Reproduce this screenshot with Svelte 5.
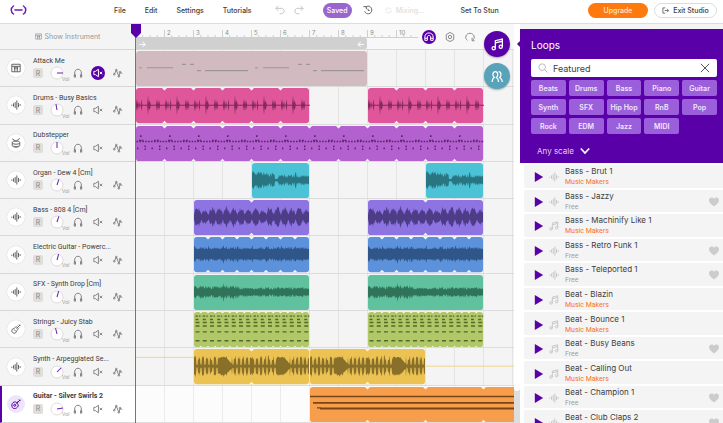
<script>
	const BAR = 29;
	const CLIP_HEIGHT = 36;

	const menu = ['File', 'Edit', 'Settings', 'Tutorials'];
	const tags = [
		'Beats', 'Drums', 'Bass', 'Piano', 'Guitar',
		'Synth', 'SFX', 'Hip Hop', 'RnB', 'Pop',
		'Rock', 'EDM', 'Jazz', 'MIDI'
	];

	// start and bars are counted in bars, seg is the length of one loop repeat
	const tracks = [
		{ name: 'Attack Me', icon: 'keys', vol: 90, muted: true, kind: 'melody', bg: '#d1bbc0', ink: '#9c9698', seg: 8, clips: [[1, 8]] },
		{ name: 'Drums - Busy Basics', icon: 'wave', vol: -10, kind: 'drums', bg: '#df569a', ink: '#842a5c', seg: 1, clips: [[1, 6], [9, 4]] },
		{ name: 'Dubstepper', icon: 'drum', vol: 0, kind: 'steps', bg: '#b461d0', ink: '#5a2470', seg: 1, clips: [[1, 12]] },
		{ name: 'Organ - Dew 4 [Cm]', icon: 'wave', vol: 18, kind: 'organ', bg: '#4cc2d7', ink: '#2a7582', seg: 2, clips: [[5, 2], [11, 2]] },
		{ name: 'Bass - 808 4 [Cm]', icon: 'wave', vol: 18, kind: 'bass', bg: '#8e73e2', ink: '#4d3c86', seg: 2, clips: [[3, 4], [9, 4]] },
		{ name: 'Electric Guitar - Powerc...', icon: 'wave', vol: 16, kind: 'dense', bg: '#5c91dc', ink: '#305689', seg: 0.5, clips: [[3, 4], [9, 4]] },
		{ name: 'SFX - Synth Drop [Cm]', icon: 'wave', vol: 16, kind: 'sfx', bg: '#60c19e', ink: '#2f7359', seg: 4, clips: [[3, 4], [9, 4]] },
		{ name: 'Strings - Juicy Stab', icon: 'strings', vol: -14, kind: 'stabs', bg: '#b0c868', ink: '#586628', seg: 0.25, clips: [[3, 4], [9, 4]] },
		{ name: 'Synth - Arpeggiated Se...', icon: 'wave', vol: 45, kind: 'arp', bg: '#ecc253', ink: '#89702a', seg: 2, clips: [[3, 4], [7, 4]], automation: [[1, 2, 9], [11, 6, 18]] },
		{ name: 'Guitar - Silver Swirls 2', icon: 'guitar', vol: 80, kind: 'chords', bg: '#f69e4c', ink: '#7b4516', seg: 2, clips: [[7, 8]], selected: true }
	];

	const loops = [
		{ name: 'Bass - Brut 1', icon: 'wave', free: false },
		{ name: 'Bass - Jazzy', icon: 'wave', free: true },
		{ name: 'Bass - Machinify Like 1', icon: 'note', free: false },
		{ name: 'Bass - Retro Funk 1', icon: 'wave', free: true },
		{ name: 'Bass - Teleported 1', icon: 'wave', free: true },
		{ name: 'Beat - Blazin', icon: 'note', free: false },
		{ name: 'Beat - Bounce 1', icon: 'note', free: false },
		{ name: 'Beat - Busy Beans', icon: 'note', free: true },
		{ name: 'Beat - Calling Out', icon: 'note', free: false },
		{ name: 'Beat - Champion 1', icon: 'wave', free: true },
		{ name: 'Beat - Club Claps 2', icon: 'wave', free: true }
	];

	let search = $state('Featured');
	let scale = $state('Any scale');

	/** @param {number} n */
	function noise(n) {
		const v = Math.sin(n * 127.1) * 43758.5453;
		return v - Math.floor(v);
	}

	/** Height of the waveform at x, measured from its centre line. */
	function amplitude(kind, x) {
		const n = noise(Math.round(x * 2) + 1);
		if (kind === 'organ') {
			if (x < 23) return 5 + n * 5 - x / 12;
			if (x < 26) return 1.2;
			if (x > 43 && x < 44.5) return 8;
			return 2 + n * 4;
		}
		if (kind === 'bass') {
			const step = (x % 58) / 7.25;
			const peak = [10, 6, 10, 9, 9, 8, 9, 7][Math.floor(step)];
			return 2 + peak * Math.pow(Math.sin((step % 1) * Math.PI), 0.8) * (0.45 + n * 0.6);
		}
		if (kind === 'dense') return 5 + Math.pow(n, 2) * 3 + (x % 14.5 < 1 ? 2 : 0);
		if (kind === 'sfx') return (x < 45 ? 3 : 2.4) + n * (x < 45 ? 4 : 3) + (x > 29 && x < 30 ? 3 : 0);
		if (kind === 'arp') {
			const p = x % 58;
			if (p > 25 && p < 38) return p < 33 ? 8 + n * 2 : 8 - (p - 33) * 1.2;
			const step = p % 4;
			return step < 2.5 ? 6 + n * 5 : 1 + n;
		}
		return 1;
	}

	function wavePath(kind, width) {
		const mid = 17.5;
		let top = `M0 ${mid}`;
		let bottom = '';
		for (let x = 0; x <= width; x += 0.5) {
			const up = amplitude(kind, x);
			const down = amplitude(kind, x) * (0.85 + noise(x * 2 + 90) * 0.25);
			top += `L${x} ${(mid - up).toFixed(1)}`;
			bottom = `L${x} ${(mid + down).toFixed(1)}` + bottom;
		}
		return top + bottom + 'Z';
	}

	function drumPath(bars) {
		const hits = [[1, 6, 2.4], [3, 4, 1.6], [5.5, 6, 1.6], [12, 10, 1.8], [13.5, 5, 3], [21, 6, 2.2], [23, 5, 2.4]];
		let d = `M0 17.1H${bars * BAR}v1H0Z`;
		for (let b = 0; b < bars; b++) {
			for (const [x, h, w] of hits) {
				d += `M${b * BAR + x - w / 2} 17.6l${w / 2} ${-h}l${w / 2} ${h}l${-w / 2} ${h}Z`;
			}
		}
		return d;
	}

	function dots(list) {
		return list.map(([x, y, w, h]) => `M${x} ${y}h${w}v${h}h${-w}Z`).join('');
	}

	function stepPath(bars) {
		const list = [];
		for (let b = 0; b < bars; b++) {
			const x = b * BAR;
			list.push([x + 4, 9.5, 1.6, 1.6]);
			for (let i = 0; i < 10; i++) list.push([x + i * 2.9 + 0.5, 15, 1.6, 1.5]);
			for (const a of [3, 5.5, 18, 21]) list.push([x + a, 14, 1.8, 1.3]);
			for (const a of [1, 15.5]) list.push([x + a, 22, 1.4, 1.6]);
			for (const a of [8.5, 23]) list.push([x + a, 20, 1.4, 1.6], [x + a, 23, 1.4, 1.6]);
		}
		return dots(list);
	}

	function stabPath(bars) {
		const list = [];
		for (let x = 1.5; x < bars * BAR - 4; x += 7.25) {
			list.push([x, 3.5, 2.5, 1.4], [x + 3.5, 3.5, 1.5, 1.4], [x, 7, 3, 1.3]);
			for (const y of [10, 13.6, 19.6, 28.6]) list.push([x, y, 4, 1.4]);
		}
		return dots(list);
	}

	function melodyPath() {
		const list = [];
		for (const x of [0, 116]) {
			list.push([x + 3, 16.5, 3, 1.2], [x + 11, 16.5, 26, 1.2]);
			list.push([x + 46, 13, 4, 1.2], [x + 54, 13, 4, 1.2]);
			list.push([x + 61, 19.5, 4, 1.2], [x + 69, 19.5, 43, 1.2]);
		}
		return dots(list);
	}

	function clipPath(kind, bars) {
		const width = bars * BAR - 1;
		if (kind === 'melody') return melodyPath();
		if (kind === 'drums') return drumPath(bars);
		if (kind === 'steps') return stepPath(bars);
		if (kind === 'stabs') return stabPath(bars);
		if (kind === 'chords') return dots([[0, 9, width, 1.5], [3, 15.4, width, 1.6], [7, 20.6, 4, 1.4], [10, 21, width, 2]]);
		return wavePath(kind, width);
	}

	// diamond cut-outs where a loop repeats
	function notchPath(bars, seg) {
		const size = seg < 0.5 ? 1.6 : 2.5;
		let d = '';
		for (let b = seg; b < bars; b += seg) {
			const x = b * BAR - 0.5;
			d += `M${x - size} 0h${size * 2}l${-size} ${size}Z`;
			d += `M${x - size} ${CLIP_HEIGHT}h${size * 2}l${-size} ${-size}Z`;
		}
		return d;
	}

	function rulerTicks() {
		let d = '';
		for (let i = 1; i <= 38; i++) {
			d += `M${i * 7.25 - 0.5} ${i % 4 === 0 ? 6 : 11}V14`;
		}
		return d;
	}
</script>

{#snippet icon(name)}
	<svg class="icon" viewBox="0 0 24 24" aria-hidden="true">
		{#if name === 'wave'}
			<path d="M2 11v3M6 8v8M10 5v14M14 1v22M18 7v10M22 10v4" />
		{:else if name === 'keys'}
			<path d="M2 3h20v18H2zM2 8h20M9 8v13M15 8v13" /><path d="M9 9v6M15 9v6" stroke-width="4" />
		{:else if name === 'drum'}
			<ellipse cx="12" cy="11" rx="9" ry="4" /><path d="M3 11v7c0 5 18 5 18 0v-7M3 2l9 6M21 1l-9 7M6 19c4 3 8 3 12 0" />
		{:else if name === 'strings'}
			<path d="M22 2l-9 9M19 1l4 4M14 7c-3-1-4 2-6 3s-5 1-6 5 3 8 7 7 4-4 5-6 4-3 3-6zM7 13l5 5M16 4l4 4" />
		{:else if name === 'guitar'}
			<path d="M22 2l-9 9M19 1l4 4M16 5l3 3M13 8c-3-2-8-1-10 3s-1 9 2 11 8 1 11-3 1-6-3-11z" /><circle cx="9" cy="15" r="2.5" />
		{:else if name === 'note'}
			<path d="M8 19V5l13-3v14" /><path d="M8 9l13-3" /><circle cx="5" cy="19" r="3" /><circle cx="18" cy="16" r="3" />
		{:else if name === 'phones'}
			<path d="M4 20v-8c0-12 16-12 16 0v8" /><path d="M3 16h3v6H3zM18 16h3v6h-3z" />
		{:else if name === 'mute'}
			<path d="M2 8h4l7-5v18l-7-5H2zM16 9l6 6M22 9l-6 6" />
		{:else if name === 'automation'}
			<path d="M3 15l5-10 6 15 3-9 5 2" /><circle cx="8" cy="5" r="2" /><circle cx="14" cy="20" r="2" /><circle cx="17" cy="10" r="2" /><circle cx="3" cy="15" r="2" />
		{:else if name === 'undo'}
			<path d="M8 2L2 8l6 6M2 8h13c9 0 9 13 0 13h-4" />
		{:else if name === 'redo'}
			<path d="M16 2l6 6-6 6M22 8H9c-9 0-9 13 0 13h4" />
		{:else if name === 'history'}
			<path d="M1 4h7v6M7 5c6-5 14-1 14 7 0 11-14 12-17 3M12 9v4h4" />
		{:else if name === 'sync'}
			<path d="M21 10c-2-9-14-9-17-1M3 14c2 9 14 9 17 1M1 6l3 4 4-3M23 18l-3-4-4 3" />
		{:else if name === 'exit'}
			<path d="M11 3H3v18h8M9 12h13M17 6l6 6-6 6" />
		{:else if name === 'magnet'}
			<path d="M2 20v-8C2-1 22-1 22 12v8h-6v-8c0-5-8-5-8 0v8zM2 15h6M16 15h6" />
		{:else if name === 'settings'}
			<path d="M12 1l9 5v12l-9 5-9-5V6z" /><circle cx="12" cy="12" r="4" />
		{:else if name === 'loop'}
			<path d="M6 20C-2 15 2 3 12 3s14 12 6 17M17 14v7h6" />
		{:else if name === 'people'}
			<path d="M2 22c0-4 1-6 4-8C2 10 3 3 8 3s6 7 2 11c3 2 4 4 4 8M14 3c5 0 6 7 2 11 3 2 5 4 5 8" />
		{:else if name === 'search'}
			<circle cx="10" cy="10" r="8" /><path d="M16 16l7 7" />
		{:else if name === 'close'}
			<path d="M2 2l20 20M22 2L2 22" />
		{:else if name === 'chevron'}
			<path d="M2 6l10 11L22 6" stroke-width="4" />
		{:else if name === 'play'}
			<path class="solid" d="M2 0l20 12L2 24z" />
		{:else if name === 'heart'}
			<path class="solid" d="M12 23C4 17 0 13 0 8c0-7 9-9 12-3 3-6 12-4 12 3 0 5-4 9-12 15z" />
		{/if}
	</svg>
{/snippet}

<svelte:head>
	<title>Set To Stun</title>
</svelte:head>

<div class="studio">
	<header class="topbar">
		<a class="logo" href="/" aria-label="Home">
			<svg viewBox="0 0 34 20">
				<path d="M7 2C1 6 1 14 7 18M27 2c6 4 6 12 0 16M10 10h14" />
			</svg>
		</a>
		<nav class="menu">
			{#each menu as item}
				<button>{item}</button>
			{/each}
		</nav>
		<div class="history">
			<button class="faint" aria-label="Undo">{@render icon('undo')}</button>
			<button class="faint" aria-label="Redo">{@render icon('redo')}</button>
		</div>
		<button class="saved">Saved</button>
		<button class="revisions" aria-label="Revisions">{@render icon('history')}</button>
		<span class="mixing">{@render icon('sync')} Mixing...</span>
		<span class="song">Set To Stun</span>
		<div class="actions">
			<button class="upgrade">Upgrade</button>
			<button class="exit">{@render icon('exit')} Exit Studio</button>
		</div>
	</header>

	<main class="workspace">
		<section class="tracks">
			<button class="show-instrument">{@render icon('keys')} Show Instrument</button>
			<div class="rows">
				{#each tracks as track}
					<div class="track" class:selected={track.selected}>
						<span class="avatar">{@render icon(track.icon)}</span>
						<div class="info">
							<div class="name">{track.name}</div>
							<div class="controls">
								<button class="record">R</button>
								<button class="knob" aria-label="Volume">
									<svg viewBox="0 0 14 14">
										<circle cx="7" cy="7" r="6" />
										<path d="M7 7V1" transform="rotate({track.vol} 7 7)" />
									</svg>
								</button>
								<span class="vol">Vol</span>
								<button class="tool" aria-label="Solo">{@render icon('phones')}</button>
								<button class="tool" class:muted={track.muted} aria-label="Mute">{@render icon('mute')}</button>
								<button class="tool" aria-label="Automation">{@render icon('automation')}</button>
							</div>
						</div>
					</div>
				{/each}
			</div>
		</section>

		<section class="timeline">
			<svg class="playhead" viewBox="0 0 10 14" aria-hidden="true"><path d="M0 0h10v9l-5 5-5-5z" /></svg>
			<div class="ruler">
				<div class="scale">
					<svg class="ticks" viewBox="0 0 282 14"><path d={rulerTicks()} /><path d="M0 13.5H282" /></svg>
					<div class="numbers">
						{#each [2, 3, 4, 5, 6, 7, 8, 9, 10] as n}
							<span>{n}</span>
						{/each}
					</div>
					<div class="loop-range"><span>→</span><span>←</span></div>
				</div>
				<div class="ruler-tools">
					<button class="snap" aria-label="Snap to grid">{@render icon('magnet')}</button>
					<button aria-label="Settings">{@render icon('settings')}</button>
					<button aria-label="Loop">{@render icon('loop')}</button>
				</div>
			</div>
			<div class="rows">
				{#each tracks as track}
					<div class="lane" class:selected={track.selected}>
						{#each track.automation ?? [] as [start, bars, level]}
							<svg
								class="clip"
								style="grid-column: {start} / span {bars}"
								viewBox="0 0 {bars * BAR} {CLIP_HEIGHT}"
								preserveAspectRatio="none"
							>
								<path d="M0 {level - 0.5}H{bars * BAR}" stroke="#edd68f" />
							</svg>
						{/each}
						{#each track.clips as [start, bars]}
							<svg
								class="clip"
								style="grid-column: {start} / span {bars}"
								viewBox="0 0 {bars * BAR} {CLIP_HEIGHT}"
								preserveAspectRatio="none"
							>
								<rect width={bars * BAR - 1} height={CLIP_HEIGHT} rx="3" fill={track.bg} />
								<path d={clipPath(track.kind, bars)} fill={track.ink} />
								<path d={notchPath(bars, track.seg)} fill="#f4f4f4" />
							</svg>
						{/each}
					</div>
				{/each}
			</div>
			<div class="floating">
				<button class="round loops-tab" aria-label="Loops">{@render icon('note')}</button>
				<button class="round people-tab" aria-label="Collaborators">{@render icon('people')}</button>
			</div>
		</section>

		<div class="scrollbar"><div class="thumb"></div></div>

		<aside class="panel">
			<span class="pointer"></span>
			<div class="filters">
				<h2>Loops</h2>
				<div class="search">
					<label for="search" aria-label="Search loops">{@render icon('search')}</label>
					<input id="search" type="text" bind:value={search} />
					<button aria-label="Clear" onclick={() => (search = '')}>{@render icon('close')}</button>
				</div>
				<div class="tags">
					{#each tags as tag}
						<button>{tag}</button>
					{/each}
				</div>
				<label class="any-scale">
					<select bind:value={scale} aria-label="Scale">
						<option>Any scale</option>
						<option>Major</option>
						<option>Minor</option>
					</select>
					{@render icon('chevron')}
				</label>
			</div>
			<ul class="loops">
				{#each loops as loop}
					<li>
						<button class="play" aria-label="Play {loop.name}">{@render icon('play')}</button>
						<span class="type">{@render icon(loop.icon)}</span>
						<div class="title">
							<div class="loop-name">{loop.name}</div>
							<div class="plan" class:free={loop.free}>{loop.free ? 'Free' : 'Music Makers'}</div>
						</div>
						{#if loop.free}
							<button class="like" aria-label="Like">{@render icon('heart')}</button>
						{/if}
					</li>
				{/each}
			</ul>
		</aside>
	</main>
</div>

<style>
	:global(body) {
		margin: 0;
		background: #f4f4f4;
	}

	.studio {
		display: flex;
		flex-direction: column;
		height: 100vh;
		overflow: hidden;
		font-family: Inter, 'Open Sans', sans-serif;
		font-size: 7px;
		color: #3c3c3c;
	}

	button {
		display: flex;
		align-items: center;
		justify-content: center;
		padding: 0;
		border: 0;
		background: none;
		font: inherit;
		color: inherit;
		white-space: nowrap;
		cursor: pointer;
	}

	.icon {
		display: block;
		flex: none;
		width: 10px;
		height: 10px;
		fill: none;
		stroke: currentColor;
		stroke-width: 2.4;
	}

	.icon .solid {
		fill: currentColor;
		stroke: none;
	}

	.topbar {
		display: flex;
		flex: none;
		align-items: center;
		box-sizing: border-box;
		height: 24px;
		padding: 0 6px 3px 10px;
		border-bottom: 1px solid #dcdcdc;
		background: #fff;
		font-weight: 500;
	}

	.logo svg {
		display: block;
		width: 17px;
		height: 10px;
		fill: none;
		stroke: #6a1bb5;
		stroke-width: 3;
		stroke-linecap: round;
	}

	.menu {
		display: flex;
		gap: 19px;
		margin-left: 87px;
	}

	.history {
		display: flex;
		gap: 9px;
		margin-left: 23px;
	}

	.faint {
		color: #c4c4c4;
	}

	.saved {
		width: 29px;
		height: 15px;
		margin-left: 19px;
		border-radius: 8px;
		background: #9b65cf;
		color: #fff;
	}

	.revisions {
		margin-left: 11px;
		color: #666;
	}

	.mixing {
		display: flex;
		align-items: center;
		gap: 4px;
		margin-left: 12px;
		color: #dedede;
	}

	.mixing .icon {
		width: 7px;
		height: 7px;
	}

	.song {
		margin-left: 36px;
	}

	.actions {
		display: flex;
		gap: 6px;
		margin-left: auto;
	}

	.upgrade {
		width: 60px;
		height: 15px;
		border-radius: 8px;
		background: #ff7a0e;
		color: #ffe6d2;
	}

	.exit {
		gap: 4px;
		box-sizing: border-box;
		width: 63px;
		height: 15px;
		border: 1px solid #dcdcdc;
		border-radius: 8px;
	}

	.exit .icon {
		width: 7px;
		height: 7px;
	}

	.workspace {
		display: flex;
		flex: 1;
		min-height: 0;
	}

	.tracks {
		display: flex;
		flex: none;
		flex-direction: column;
		width: 135px;
	}

	.show-instrument {
		gap: 3px;
		box-sizing: border-box;
		height: 26px;
		border-bottom: 1px solid #d8d8d8;
		color: #999;
	}

	.show-instrument .icon {
		width: 7px;
		height: 7px;
	}

	.rows {
		display: grid;
		flex: 1;
		grid-auto-rows: minmax(0, 1fr);
		min-height: 0;
	}

	.track {
		display: flex;
		align-items: center;
		gap: 8px;
		box-sizing: border-box;
		padding-left: 7px;
		border-bottom: 1px solid #d8d8d8;
	}

	.track.selected {
		padding-left: 5px;
		border-left: 2px solid #5a00a8;
		background: #fff;
	}

	.avatar {
		display: grid;
		place-items: center;
		flex: none;
		width: 18px;
		height: 18px;
		border-radius: 50%;
		background: #fff;
		box-shadow: 0 0 1px #bbb;
		color: #666;
	}

	.selected .avatar {
		background: #eee6f8;
		box-shadow: none;
		color: #5a00a8;
	}

	.name {
		font-family: Roboto, sans-serif;
		line-height: 10px;
		white-space: nowrap;
	}

	.selected .name {
		font-weight: 700;
	}

	.controls {
		display: flex;
		align-items: center;
		height: 15px;
		color: #858585;
	}

	.record {
		width: 10px;
		height: 10px;
		border-radius: 2px;
		background: #dedede;
		color: #888;
	}

	.knob {
		margin-left: 7px;
	}

	.knob svg {
		width: 14px;
		height: 14px;
		fill: #fff;
		stroke: #ddd;
	}

	.knob path {
		stroke: #6a1bb5;
	}

	.vol {
		align-self: flex-end;
		margin-left: -2px;
		font-size: 5px;
		line-height: 4px;
		color: #999;
	}

	.tool {
		width: 14px;
		height: 14px;
		margin-left: 2px;
		border-radius: 50%;
	}

	.tool + .tool {
		margin-left: 6px;
	}

	.tool.muted {
		background: #5a00a8;
		color: #fff;
	}

	.timeline {
		position: relative;
		display: flex;
		flex: 1;
		flex-direction: column;
		min-width: 0;
		border-left: 1px solid #8a5cc6;
	}

	.playhead {
		position: absolute;
		top: 0;
		left: -5px;
		z-index: 2;
		width: 10px;
		height: 14px;
		fill: #5a00a8;
	}

	.ruler {
		display: flex;
		box-sizing: border-box;
		height: 26px;
		border-bottom: 1px solid #d8d8d8;
		background: #f8f8f8;
	}

	.scale {
		display: grid;
		grid-template-rows: 14px 11px;
		flex: none;
		width: 282px;
	}

	.ticks {
		grid-area: 1 / 1;
		width: 282px;
		height: 14px;
		fill: none;
		stroke: #cfcfcf;
	}

	.numbers {
		display: grid;
		grid-area: 1 / 1;
		grid-template-columns: repeat(9, 29px);
		padding-left: 31px;
		line-height: 17px;
		font-size: 6px;
		color: #8c8c8c;
	}

	.loop-range {
		display: flex;
		align-items: center;
		justify-content: space-between;
		box-sizing: border-box;
		width: 231px;
		padding: 0 2px;
		border-radius: 0 2px 2px 0;
		background: #d0d0d0;
		color: #fff;
		font-size: 9px;
		line-height: 10px;
	}

	.ruler-tools {
		display: flex;
		align-items: center;
		gap: 7px;
		margin-left: 4px;
		color: #8c8c8c;
	}

	.ruler-tools button {
		width: 13px;
		height: 13px;
	}

	.ruler-tools .snap {
		width: 14px;
		height: 14px;
		border-radius: 50%;
		background: #5a00a8;
		color: #fff;
	}

	.lane {
		display: grid;
		grid-template-rows: minmax(0, 1fr);
		grid-template-columns: repeat(16, 29px);
		box-sizing: border-box;
		min-width: 0;
		padding-top: 1px;
		overflow: hidden;
		border-bottom: 1px solid #dcdcdc;
		background: repeating-linear-gradient(90deg, #f4f4f4 0 28px, #e4e4e4 28px 29px);
	}

	.lane.selected {
		background: repeating-linear-gradient(90deg, #fcfcfc 0 28px, #ececec 28px 29px);
	}

	.clip {
		display: block;
		grid-row: 1;
		width: 100%;
		height: 100%;
		min-height: 0;
	}

	.floating {
		position: absolute;
		top: 7px;
		right: 4px;
		z-index: 2;
		display: flex;
		flex-direction: column;
		gap: 6px;
	}

	.round {
		width: 26px;
		height: 26px;
		border-radius: 50%;
		background: #5a00a8;
		box-shadow: 0 1px 2px #aaa;
		color: #fff;
	}

	.round .icon {
		width: 13px;
		height: 13px;
	}

	.people-tab {
		background: #58a2ba;
	}

	.scrollbar {
		flex: none;
		width: 6px;
		background: #dedede;
	}

	.thumb {
		height: 92%;
		border-radius: 0 0 3px 3px;
		background: #fff;
	}

	.panel {
		position: relative;
		display: flex;
		flex: none;
		flex-direction: column;
		width: 203px;
		margin-top: 5px;
		background: #fff;
	}

	.pointer {
		position: absolute;
		top: 12px;
		left: -3px;
		border: solid transparent;
		border-width: 3px 3px 3px 0;
		border-right-color: #5a00a8;
	}

	.filters {
		padding: 8px 6px 5px 11px;
		background: #5a00a8;
		color: #fff;
	}

	h2 {
		margin: 0;
		font-size: 10px;
		font-weight: 400;
		line-height: 16px;
	}

	.search {
		display: flex;
		align-items: center;
		gap: 5px;
		height: 18px;
		margin-top: 6px;
		padding: 0 7px;
		border-radius: 2px;
		background: #fff;
		color: #555;
	}

	.search label {
		color: #bbb;
	}

	.search input {
		flex: 1;
		min-width: 0;
		padding: 0;
		border: 0;
		outline: 0;
		font: inherit;
		font-size: 9px;
		color: #3c3c3c;
	}

	.tags {
		display: grid;
		grid-template-columns: repeat(5, 1fr);
		gap: 3px;
		margin-top: 3px;
	}

	.tags button {
		height: 16px;
		border-radius: 2px;
		background: #9c5fdb;
		font-weight: 600;
		color: #f1e6fb;
	}

	.any-scale {
		display: flex;
		align-items: center;
		gap: 6px;
		height: 14px;
		margin: 10px 0 0 6px;
	}

	.any-scale select {
		padding: 0;
		border: 0;
		appearance: none;
		background: none;
		font: inherit;
		font-size: 8px;
		color: #e2d2f2;
	}

	.loops {
		display: grid;
		flex: 1;
		grid-auto-rows: minmax(0, 1fr);
		gap: 2px;
		min-height: 0;
		margin: 2px 0 -10px 4px;
		padding: 0;
		list-style: none;
	}

	.loops li {
		display: flex;
		align-items: center;
		padding: 2px 4px 0 10px;
		border-radius: 2px 0 0 2px;
		background: #f4f4f4;
	}

	.play {
		color: #5a00a8;
	}

	.type {
		margin-left: 5px;
		color: #c8c8c8;
	}

	.title {
		flex: 1;
		margin-left: 6px;
		white-space: nowrap;
	}

	.loop-name {
		font-size: 8px;
		line-height: 11px;
	}

	.plan {
		font-family: Roboto, sans-serif;
		line-height: 11px;
		color: #f4741f;
	}

	.plan.free {
		color: #a0a0a0;
	}

	.like {
		color: #ccc;
	}
</style>
